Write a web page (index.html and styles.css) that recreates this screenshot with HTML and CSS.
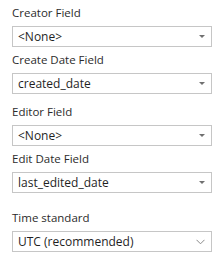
FILE: index.html
```html
<!DOCTYPE html>
<html lang="en">
<head>
    <meta charset="UTF-8">
    <title>Field settings</title>
    <link rel="stylesheet" href="styles.css">
</head>
<body>
    <div class="panel">
        <div class="group">
            <label class="field-label">Creator Field</label>
            <div class="combo"><span>&lt;None&gt;</span><span class="caret"></span></div>
            <label class="field-label">Create Date Field</label>
            <div class="combo"><span>created_date</span><span class="caret"></span></div>
        </div>
        <div class="group">
            <label class="field-label">Editor Field</label>
            <div class="combo"><span>&lt;None&gt;</span><span class="caret"></span></div>
            <label class="field-label">Edit Date Field</label>
            <div class="combo"><span>last_edited_date</span><span class="caret"></span></div>
        </div>
        <div class="group last">
            <label class="field-label">Time standard</label>
            <div class="combo"><span>UTC (recommended)</span>
                <svg class="chevron" width="9" height="6" viewBox="0 0 9 6"><path d="M0.5 0.8 L4.5 4.8 L8.5 0.8" fill="none" stroke="#8a8a8a" stroke-width="1"/></svg>
            </div>
        </div>
    </div>
</body>
</html>
```

FILE: styles.css
```css
body {
    margin: 0;
    background: #ffffff;
    font-family: "Open Sans", "Noto Sans", sans-serif;
    font-size: 11.5px;
    color: #2b2b2b;
}
.panel {
    padding: 5px 6px 0 12px;
}
.group {
    display: flex;
    flex-direction: column;
    margin-bottom: 5px;
}
.group.last {
    margin-top: 12px;
}
.field-label {
    line-height: 16px;
    margin-bottom: 5px;
}
.combo {
    width: 200px;
    height: 21px;
    box-sizing: border-box;
    border: 1px solid #c6c6c6;
    display: flex;
    align-items: center;
    justify-content: space-between;
    padding: 0 6px 0 5px;
    margin-bottom: 5px;
    color: #1f1f1f;
    font-size: 12px;
}
.caret {
    width: 0;
    height: 0;
    border-left: 3px solid transparent;
    border-right: 3px solid transparent;
    border-top: 3px solid #707070;
}
.chevron {
    display: block;
}
```
